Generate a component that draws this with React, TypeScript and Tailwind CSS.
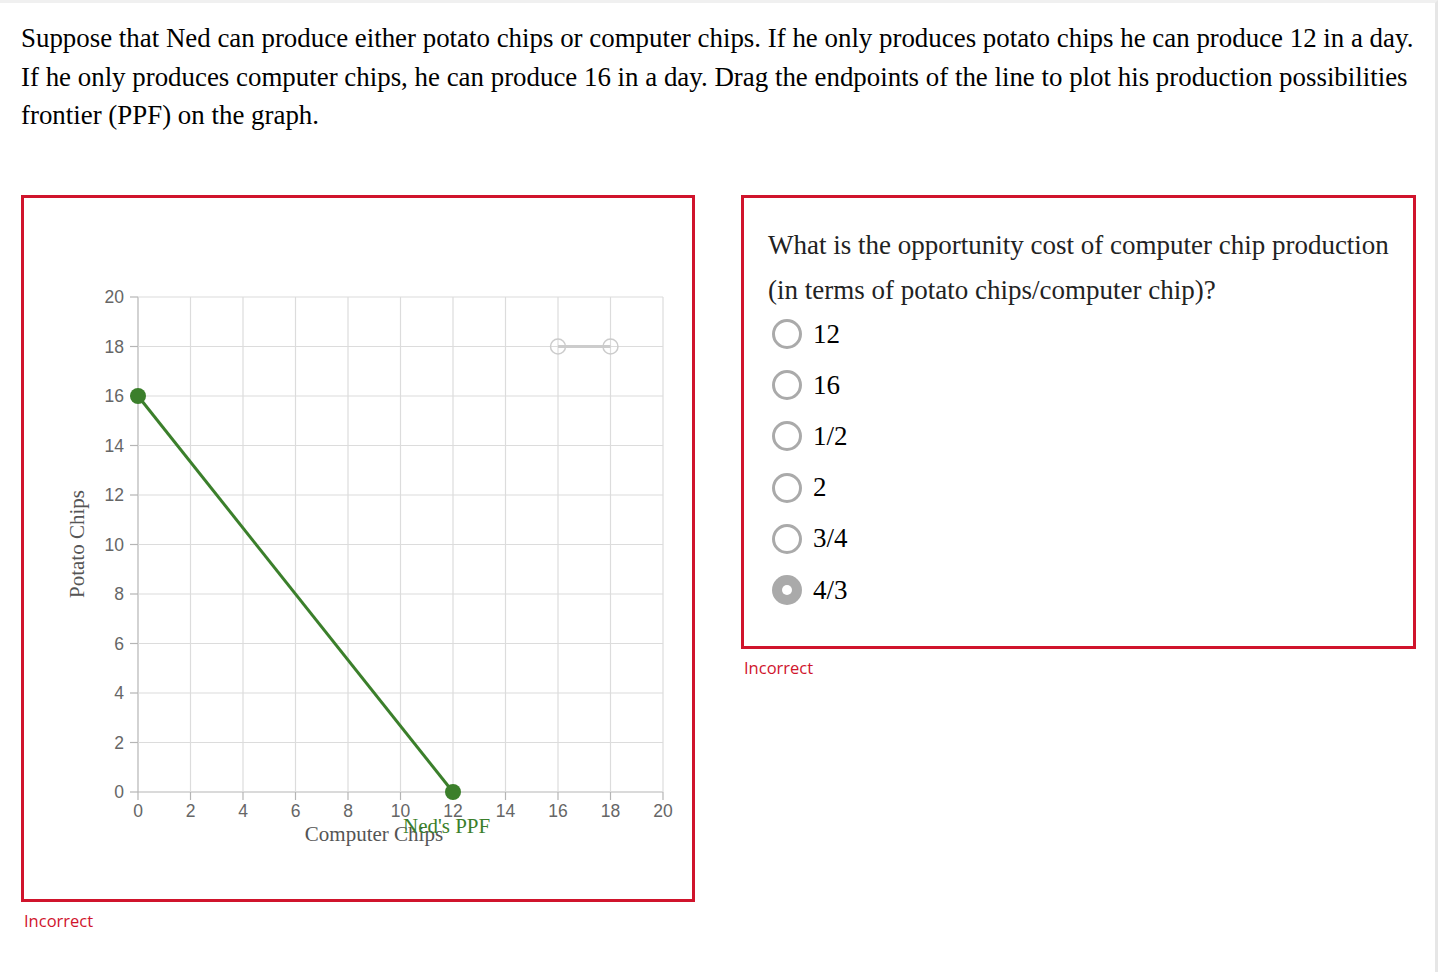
import React from "react";

const X0 = 114;
const X1 = 639;
const Y0 = 594;
const Y1 = 99;

const sx = (v: number) => X0 + ((X1 - X0) * v) / 20;
const sy = (v: number) => Y0 - ((Y0 - Y1) * v) / 20;

const ticks = [0, 2, 4, 6, 8, 10, 12, 14, 16, 18, 20];

const PPFChart = () => {
  const green = "#3b7f2b";
  return (
    <svg width={668} height={701} viewBox="0 0 668 701">
      {/* grid */}
      {ticks.map((t) => (
        <g key={t}>
          <line x1={sx(t)} y1={Y1} x2={sx(t)} y2={Y0} stroke={t === 0 ? "#b5b5b5" : "#dcdcdc"} strokeWidth={1.2} />
          <line x1={X0} y1={sy(t)} x2={X1} y2={sy(t)} stroke={t === 0 ? "#b5b5b5" : "#dcdcdc"} strokeWidth={1.2} />
          <line x1={X0 - 8} y1={sy(t)} x2={X0} y2={sy(t)} stroke="#b5b5b5" strokeWidth={1.2} />
          <line x1={sx(t)} y1={Y0} x2={sx(t)} y2={Y0 + 8} stroke="#b5b5b5" strokeWidth={1.2} />
          <text x={X0 - 14} y={sy(t) + 6} textAnchor="end" fontSize={17.5} fill="#666" fontFamily="'Liberation Sans', Arial, sans-serif">
            {t}
          </text>
          <text x={sx(t)} y={Y0 + 25} textAnchor="middle" fontSize={17.5} fill="#666" fontFamily="'Liberation Sans', Arial, sans-serif">
            {t}
          </text>
        </g>
      ))}

      {/* unused handle */}
      <line x1={sx(16)} y1={sy(18)} x2={sx(18)} y2={sy(18)} stroke="#cccccc" strokeWidth={3} />
      <circle cx={sx(16)} cy={sy(18)} r={7.5} fill="none" stroke="#cccccc" strokeWidth={1.5} />
      <circle cx={sx(18)} cy={sy(18)} r={7.5} fill="none" stroke="#cccccc" strokeWidth={1.5} />

      {/* PPF */}
      <line x1={sx(0)} y1={sy(16)} x2={sx(12)} y2={sy(0)} stroke={green} strokeWidth={3} />
      <circle cx={sx(0)} cy={sy(16)} r={8} fill={green} />
      <circle cx={sx(12)} cy={sy(0)} r={8} fill={green} />

      {/* labels */}
      <text x={350} y={643} textAnchor="middle" fontSize={21} fill="#555" fontFamily="'Liberation Serif', 'Times New Roman', serif">
        Computer Chips
      </text>
      <text x={379} y={635} fontSize={21} fill={green} fontFamily="'Liberation Serif', 'Times New Roman', serif">
        Ned's PPF
      </text>
      <text
        x={0}
        y={0}
        transform="translate(60 346) rotate(-90)"
        textAnchor="middle"
        fontSize={21}
        fill="#555"
        fontFamily="'Liberation Serif', 'Times New Roman', serif"
      >
        Potato Chips
      </text>
    </svg>
  );
};

const options = ["12", "16", "1/2", "2", "3/4", "4/3"];

const App = () => {
  const selected = "4/3";

  return (
    <div className="min-h-screen bg-white border-t-[3px] border-t-[#f0f0f0] border-r-[3px] border-r-[#e6e6e6] font-[family-name:Liberation_Serif,Times_New_Roman,serif]">
      <div className="pl-[21px] pr-[14px] pt-[16px]">
        <p className="text-[26.9px] leading-[38.5px] text-black">
          Suppose that Ned can produce either potato chips or computer chips. If he only produces potato chips he can produce 12 in a day. If he only produces computer chips, he can produce 16 in a day. Drag the endpoints of the line to plot his production possibilities frontier (PPF) on the graph.
        </p>

        <div className="flex gap-[46px] mt-[60px] items-start">
          {/* graph */}
          <div className="w-[674px] shrink-0">
            <div className="border-[3px] border-[#d0142c] h-[707px]">
              <PPFChart />
            </div>
            <p className="mt-[8px] pl-[3px] text-[16.5px] leading-[22px] text-[#d0142c] font-[family-name:Open_Sans,sans-serif]">
              Incorrect
            </p>
          </div>

          {/* question */}
          <div className="w-[675px] shrink-0">
            <div className="border-[3px] border-[#d0142c] pl-[24px] pr-4 pt-[25px] pb-[30px]">
              <p className="text-[27px] leading-[45px] text-[#222]">
                What is the opportunity cost of computer chip production (in terms of potato chips/computer chip)?
              </p>
              <div className="-mt-[4px] ml-[4px]">
                {options.map((opt) => (
                  <label key={opt} className="flex items-center h-[51.2px] gap-[11px] cursor-pointer">
                    {opt === selected ? (
                      <span className="w-[30px] h-[30px] rounded-full bg-[#aaaaaa] flex items-center justify-center">
                        <span className="w-[10px] h-[10px] rounded-full bg-white" />
                      </span>
                    ) : (
                      <span className="w-[30px] h-[30px] rounded-full border-[3px] border-[#aaaaaa] bg-white" />
                    )}
                    <span className="text-[27px] leading-none text-black">{opt}</span>
                  </label>
                ))}
              </div>
            </div>
            <p className="mt-[8px] pl-[3px] text-[16.5px] leading-[22px] text-[#d0142c] font-[family-name:Open_Sans,sans-serif]">
              Incorrect
            </p>
          </div>
        </div>
      </div>
    </div>
  );
};

export default App;
